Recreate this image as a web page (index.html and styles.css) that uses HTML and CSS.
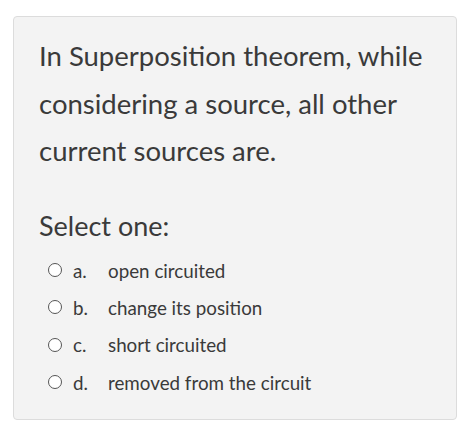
FILE: index.html
```html
<!DOCTYPE html>
<html>
<head>
<meta charset="utf-8">
<link rel="stylesheet" href="styles.css">
</head>
<body>
<div class="card">
  <p class="question">In Superposition theorem, while considering a source, all other current sources are.</p>
  <div class="prompt">Select one:</div>
  <div class="answers">
    <label class="opt"><span class="radio"></span><span class="letter">a.</span><span class="txt">open circuited</span></label>
    <label class="opt"><span class="radio"></span><span class="letter">b.</span><span class="txt">change its position</span></label>
    <label class="opt"><span class="radio"></span><span class="letter">c.</span><span class="txt">short circuited</span></label>
    <label class="opt"><span class="radio"></span><span class="letter">d.</span><span class="txt">removed from the circuit</span></label>
  </div>
</div>
</body>
</html>
```
FILE: styles.css
```css
html, body { margin: 0; padding: 0; background: #fff; }
body {
  font-family: Lato, "Liberation Sans", sans-serif;
  color: #3a3a3a;
  padding: 16px 17px 9px 13px;
}
.card {
  box-sizing: border-box;
  height: 404px;
  background: #f3f3f3;
  border: 1px solid #dcdcdc;
  border-radius: 4px;
  padding: 15px 18px 0 25px;
}
.question {
  margin: 0;
  font-size: 27.5px;
  line-height: 47.5px;
}
.prompt {
  margin-top: 31px;
  font-size: 27px;
  line-height: 40px;
}
.answers {
  margin-top: 6px;
  display: flex;
  flex-direction: column;
}
.opt {
  display: flex;
  align-items: center;
  height: 37.3px;
  font-size: 18.8px;
}
.radio {
  box-sizing: border-box;
  width: 14px;
  height: 14px;
  border: 1px solid #555;
  border-radius: 50%;
  background: #fff;
  margin-left: 9px;
  margin-right: 11px;
}
.letter { width: 35px; }
```
